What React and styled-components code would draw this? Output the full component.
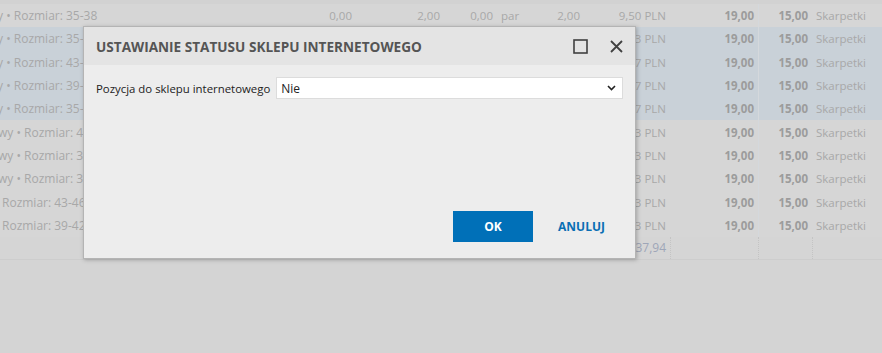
import React from 'react'
import styled, { createGlobalStyle, css } from 'styled-components'

const GlobalStyle = createGlobalStyle`
  html, body {
    margin: 0;
    padding: 0;
    background: #d4d4d4;
    font-family: 'Open Sans', 'Noto Sans', sans-serif;
  }
`

const rows = [
  { name: 'y • Rozmiar: 35-38', shift: -3, price: '9,50 PLN', sel: false },
  { name: 'y • Rozmiar: 35-38', shift: -3, price: '10,03 PLN', sel: true },
  { name: 'y • Rozmiar: 43-46', shift: -3, price: '10,07 PLN', sel: true },
  { name: 'y • Rozmiar: 39-42', shift: -3, price: '10,07 PLN', sel: true },
  { name: 'y • Rozmiar: 35-38', shift: -3, price: '10,07 PLN', sel: true },
  { name: 'wy • Rozmiar: 43-46', shift: -2, price: '10,03 PLN', sel: false },
  { name: 'wy • Rozmiar: 39-42', shift: -2, price: '10,03 PLN', sel: false },
  { name: 'wy • Rozmiar: 35-38', shift: -2, price: '10,03 PLN', sel: false },
  { name: 'Rozmiar: 43-46', shift: 2, price: '10,03 PLN', sel: false },
  { name: 'Rozmiar: 39-42', shift: 2, price: '10,03 PLN', sel: false },
]

export default function App() {
  return (
    <>
      <GlobalStyle />
      <Page>
        <Table>
          <TopStrip />
          {rows.map((r, i) => (
            <Row key={i} $sel={r.sel}>
              <NameCell>
                <NameText $shift={r.shift}>{r.name}</NameText>
              </NameCell>
              <Cell>0,00</Cell>
              <Cell>2,00</Cell>
              <Cell>0,00</Cell>
              <Cell $left>par</Cell>
              <Cell>2,00</Cell>
              <Cell>{r.price}</Cell>
              <Cell $bold>19,00</Cell>
              <Cell $bold $sep>15,00</Cell>
              <Cell $left>Skarpetki</Cell>
            </Row>
          ))}
          <FooterRow>
            <NameCell />
            <Cell />
            <Cell />
            <Cell />
            <Cell />
            <Cell />
            <Cell $sum>37,94</Cell>
            <Cell $dotted />
            <Cell $dotted />
            <Cell $dotted />
          </FooterRow>
        </Table>

        <Dialog>
          <Header>
            <Title>Ustawianie statusu sklepu internetowego</Title>
            <HeaderIcons>
              <IconButton aria-label="maksymalizuj">
                <svg width="15" height="15" viewBox="0 0 15 15">
                  <rect x="1" y="1" width="13" height="13" fill="none" stroke="#404040" strokeWidth="1.6" />
                </svg>
              </IconButton>
              <IconButton aria-label="zamknij">
                <svg width="13" height="13" viewBox="0 0 13 13">
                  <path d="M1 1 L12 12 M12 1 L1 12" stroke="#404040" strokeWidth="1.8" />
                </svg>
              </IconButton>
            </HeaderIcons>
          </Header>
          <Body>
            <Field>
              <Label>Pozycja do sklepu internetowego</Label>
              <Select>
                <span>Nie</span>
                <svg width="9" height="6" viewBox="0 0 9 6">
                  <path d="M1 1 L4.5 4.5 L8 1" fill="none" stroke="#222" strokeWidth="1.6" />
                </svg>
              </Select>
            </Field>
            <Actions>
              <PrimaryButton>OK</PrimaryButton>
              <FlatButton>Anuluj</FlatButton>
            </Actions>
          </Body>
        </Dialog>
      </Page>
    </>
  )
}

const Page = styled.div`
  position: relative;
  width: 882px;
  height: 353px;
  overflow: hidden;
  background: #d4d4d4;
`

const Table = styled.div`
  display: flex;
  flex-direction: column;
`

const TopStrip = styled.div`
  height: 4px;
  background: #d2d2d2;
`

const columns = '300px 56px 88px 53px 43px 44px 86px 88px 54px 70px'

const Row = styled.div`
  display: grid;
  grid-template-columns: ${columns};
  height: 23.3px;
  align-items: center;
  background: ${(p) => (p.$sel ? '#c9d1d8' : '#d6d6d6')};
  font-size: 11.5px;
  color: #a8a8a8;
`

const FooterRow = styled(Row)`
  height: 22px;
  background: #d5d5d5;
  border-bottom: 1px solid #cdcdcd;
  align-items: stretch;
`

const NameCell = styled.div`
  overflow: hidden;
  white-space: nowrap;
  font-size: 12px;
`

const NameText = styled.span`
  display: inline-block;
  margin-left: ${(p) => p.$shift}px;
`

const Cell = styled.div`
  white-space: nowrap;
  height: 100%;
  display: flex;
  align-items: center;
  justify-content: ${(p) => (p.$left ? 'flex-start' : 'flex-end')};
  padding: ${(p) => (p.$left ? '0 0 0 4px' : '0 4px 0 0')};
  box-sizing: border-box;
  ${(p) =>
    p.$bold &&
    css`
      font-weight: 700;
      color: #9c9c9c;
    `}
  ${(p) =>
    p.$sep &&
    css`
      border-left: 1px solid #d4d8dc;
    `}
  ${(p) =>
    p.$sum &&
    css`
      color: #9ea6b8;
      font-size: 12px;
    `}
  ${(p) =>
    p.$dotted &&
    css`
      border-left: 1px dotted #c4c4c4;
    `}
`

const Dialog = styled.div`
  position: absolute;
  left: 84px;
  top: 27px;
  width: 551px;
  height: 231px;
  display: flex;
  flex-direction: column;
  background: #ededed;
  box-shadow: 0 0 0 1px #b4b4b4, 1px 1px 4px 1px rgba(0, 0, 0, 0.25);
`

const Header = styled.div`
  height: 38px;
  flex-shrink: 0;
  display: flex;
  align-items: center;
  justify-content: space-between;
  padding: 0 12px;
  background: #e4e4e4;
`

const Title = styled.div`
  font-size: 13.6px;
  font-weight: 700;
  text-transform: uppercase;
  color: #555;
  padding-top: 1px;
`

const HeaderIcons = styled.div`
  display: flex;
  align-items: center;
  gap: 22px;
`

const IconButton = styled.div`
  display: flex;
  align-items: center;
  justify-content: center;
`

const Body = styled.div`
  flex: 1;
  display: flex;
  flex-direction: column;
  justify-content: space-between;
  padding: 12px 12px 16px 12px;
`

const Field = styled.div`
  display: flex;
  align-items: center;
  gap: 6px;
`

const Label = styled.label`
  font-size: 11.4px;
  color: #222;
`

const Select = styled.div`
  flex: 1;
  height: 22px;
  box-sizing: border-box;
  display: flex;
  align-items: center;
  justify-content: space-between;
  padding: 0 6px 0 4px;
  background: #fff;
  border: 1px solid #dcdcdc;
  font-size: 12px;
  color: #222;
`

const Actions = styled.div`
  display: flex;
  justify-content: flex-end;
  align-items: center;
  gap: 10px;
  padding-right: 10px;
`

const PrimaryButton = styled.button`
  width: 80px;
  height: 31px;
  border: none;
  background: #0070b8;
  color: #fff;
  font-family: inherit;
  font-size: 12px;
  font-weight: 700;
`

const FlatButton = styled.button`
  height: 31px;
  padding: 0 8px;
  margin-left: 7px;
  border: none;
  background: transparent;
  color: #0a6fb4;
  font-family: inherit;
  font-size: 12px;
  font-weight: 700;
  text-transform: uppercase;
`
